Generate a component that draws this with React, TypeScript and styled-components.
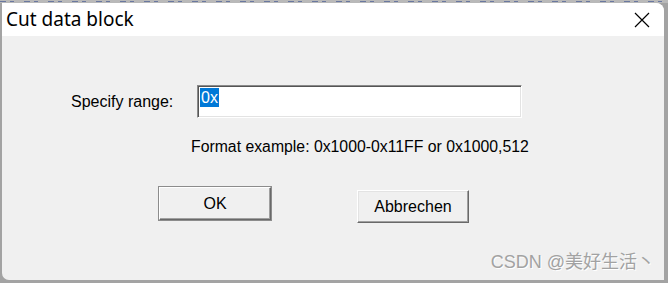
import React from 'react';
import styled, { createGlobalStyle } from 'styled-components';

const GlobalStyle = createGlobalStyle`
  html, body {
    margin: 0;
    padding: 0;
    background: #a8a8a8;
  }
`;

const Screen = styled.div`
  width: 668px;
  height: 283px;
  overflow: hidden;
  background: #a3a3a3;
  display: flex;
  flex-direction: column;
`;

// the hex view behind the dialog, only its bottom pixels show
const Backdrop = styled.div`
  height: 3px;
  background-color: #b9b9b9;
  background-image: repeating-linear-gradient(
    90deg,
    #6a78a0 0 6px,
    transparent 6px 10px,
    #6a78a0 10px 14px,
    transparent 14px 24px
  );
  background-size: 100% 1px;
  background-repeat: no-repeat;
  background-position: 0 1px;
`;

const Window = styled.div`
  margin-left: 2px;
  width: 662px;
  height: 277px;
  background: #f0f0f0;
  border-top-right-radius: 8px;
  border-bottom-left-radius: 7px;
  overflow: hidden;
  display: flex;
  flex-direction: column;
  position: relative;
`;

const TitleBar = styled.div`
  height: 33px;
  background: #ffffff;
  display: flex;
  align-items: center;
  justify-content: space-between;
  padding: 0 14px 0 4px;
  font-family: 'Noto Sans', 'Liberation Sans', sans-serif;
  font-size: 19px;
  color: #000;
`;

const Title = styled.span`
  margin-top: -1px;
`;

const Body = styled.div`
  flex: 1;
  display: flex;
  flex-direction: column;
  padding: 49px 0 0 0;
  font-family: 'Liberation Sans', Arial, sans-serif;
  font-size: 16px;
  color: #000;
`;

const FieldRow = styled.div`
  display: flex;
  align-items: center;
  padding-left: 69px;
`;

const Label = styled.span`
  width: 126px;
`;

const Edit = styled.div`
  width: 321px;
  height: 29px;
  background: #fff;
  border: 1px solid;
  border-color: #8a8a8a #ffffff #ffffff #8a8a8a;
  box-shadow: inset 1px 1px 0 #555, inset -1px -1px 0 #e3e3e3;
  padding: 2px 0 0 2px;
  box-sizing: content-box;
  display: flex;
  align-items: flex-start;
`;

const Selected = styled.span`
  background: #0078d7;
  color: #fff;
  font-size: 16px;
  line-height: 19px;
  padding: 0 1px;
`;

const Hint = styled.div`
  margin: 20px 0 0 189px;
  font-size: 15.8px;
`;

const ButtonRow = styled.div`
  display: flex;
  align-items: flex-start;
  margin-top: 31px;
  padding-left: 157px;
  gap: 86px;
`;

const Button = styled.div<{ $default?: boolean; $offset?: number }>`
  width: 110px;
  height: 31px;
  margin-top: ${(p) => p.$offset || 0}px;
  display: flex;
  align-items: center;
  justify-content: center;
  background: #f0f0f0;
  border: 1px solid;
  border-color: #ffffff #696969 #696969 #ffffff;
  box-shadow: ${(p) =>
    p.$default
      ? '0 0 0 1px #8c8c8c, inset -1px -1px 0 #a0a0a0'
      : 'inset -1px -1px 0 #a0a0a0, inset 1px 1px 0 #e3e3e3'};
  box-sizing: content-box;
  font-size: 16px;
`;

const Watermark = styled.div`
  position: absolute;
  right: 9px;
  bottom: 7px;
  font-family: 'Liberation Sans', 'Noto Sans CJK SC', sans-serif;
  font-size: 18px;
  color: #a2a2a2;
  text-shadow: 1px 1px 0 #ffffff;
`;

const CloseIcon = () => (
  <svg width="16" height="16" viewBox="0 0 16 16">
    <path d="M1 1 L15 15 M15 1 L1 15" stroke="#000" strokeWidth="1.2" fill="none" />
  </svg>
);

export default function App() {
  return (
    <Screen>
      <GlobalStyle />
      <Backdrop />
      <Window>
        <TitleBar>
          <Title>Cut data block</Title>
          <CloseIcon />
        </TitleBar>
        <Body>
          <FieldRow>
            <Label>Specify range:</Label>
            <Edit>
              <Selected>0x</Selected>
            </Edit>
          </FieldRow>
          <Hint>Format example: 0x1000-0x11FF or 0x1000,512</Hint>
          <ButtonRow>
            <Button $default>OK</Button>
            <Button $offset={3}>Abbrechen</Button>
          </ButtonRow>
        </Body>
        <Watermark>CSDN @美好生活丶</Watermark>
      </Window>
    </Screen>
  );
}
